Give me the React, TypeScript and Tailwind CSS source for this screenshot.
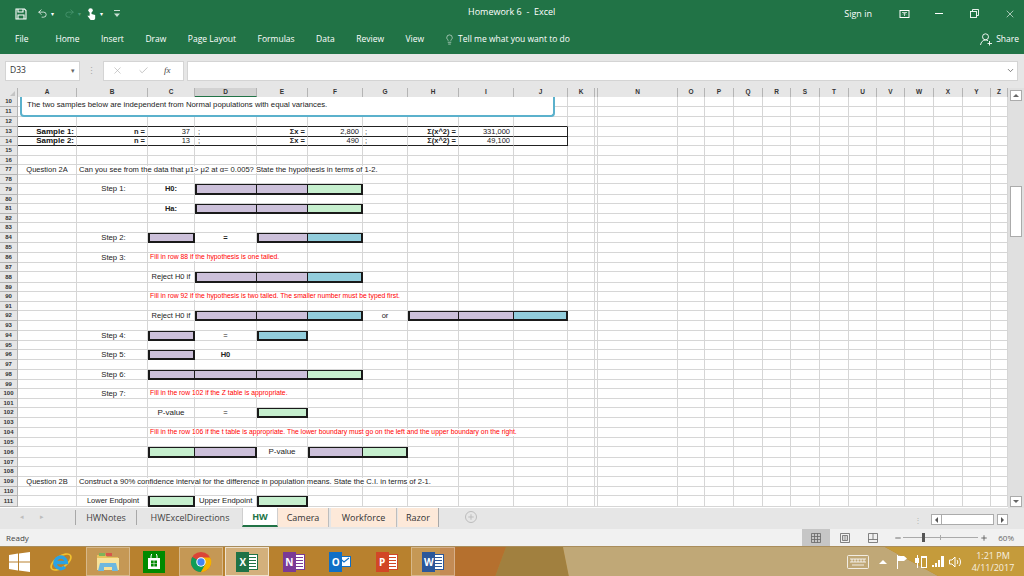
import { ChevronDown, Lightbulb, X, Check, Undo2, Redo2, Minus, Plus } from "lucide-react";

type Kind = "p" | "g" | "b";
type Cell = { t?: string; k?: Kind; c?: string; o?: boolean };
type Row = { n: string; h: string; cells?: Record<string, Cell>; box?: boolean };

const cols = [
  { n: "A", w: "w-[59px]" },
  { n: "B", w: "w-[71px]" },
  { n: "C", w: "w-[47px]" },
  { n: "D", w: "w-[62px]" },
  { n: "E", w: "w-[51px]" },
  { n: "F", w: "w-[55px]" },
  { n: "G", w: "w-[45px]" },
  { n: "H", w: "w-[51px]" },
  { n: "I", w: "w-[55px]" },
  { n: "J", w: "w-[54px]" },
  { n: "K", w: "w-[27px]" },
  { n: "", w: "w-[3px]" },
  { n: "N", w: "w-[80px]" },
  { n: "O", w: "w-[27px]" },
  { n: "P", w: "w-[29px]" },
  { n: "Q", w: "w-[29px]" },
  { n: "R", w: "w-[28px]" },
  { n: "S", w: "w-[29px]" },
  { n: "T", w: "w-[29px]" },
  { n: "U", w: "w-[28px]" },
  { n: "V", w: "w-[28px]" },
  { n: "W", w: "w-[29px]" },
  { n: "X", w: "w-[29px]" },
  { n: "Y", w: "w-[28px]" },
  { n: "Z", w: "w-[17px]" },
];

const fills: Record<Kind, string> = {
  p: "bg-[#ccc0da]",
  g: "bg-[#c6efce]",
  b: "bg-[#92cddc]",
};

const mid = "justify-center";
const step = "justify-center pl-[3px] text-[7.75px]";
const right = "justify-end pr-[2px]";
const red = "text-[#ff0000] pl-[2px] text-[6.8px]";
const long = "pl-[2px] text-[7.6px]";
const bold = "font-bold text-[8px] text-[#111]";
const small = "font-bold";

const rows: Row[] = [
  { n: "10", h: "h-[10px]" },
  { n: "11", h: "h-[10px]" },
  { n: "12", h: "h-[10px]", box: true },
  {
    n: "13",
    h: "h-[10px]",
    box: true,
    cells: {
      A: { t: "Sample 1:", c: `${right} ${bold}` },
      B: { t: "n =", c: `${right} ${small}` },
      C: { t: "37", c: "justify-end pr-[4px]" },
      D: { t: ";", c: "pl-[3px]" },
      E: { t: "Σx =", c: `${right} ${small}` },
      F: { t: "2,800", c: "justify-end pr-[3px]" },
      G: { t: ";", c: "pl-[2px]" },
      H: { t: "Σ(x^2) =", c: `${right} ${small}` },
      I: { t: "331,000", c: "justify-end pr-[3px]" },
    },
  },
  {
    n: "14",
    h: "h-[9px]",
    box: true,
    cells: {
      A: { t: "Sample 2:", c: `${right} ${bold}` },
      B: { t: "n =", c: `${right} ${small}` },
      C: { t: "13", c: "justify-end pr-[4px]" },
      D: { t: ";", c: "pl-[3px]" },
      E: { t: "Σx =", c: `${right} ${small}` },
      F: { t: "490", c: "justify-end pr-[3px]" },
      G: { t: ";", c: "pl-[2px]" },
      H: { t: "Σ(x^2) =", c: `${right} ${small}` },
      I: { t: "49,100", c: "justify-end pr-[3px]" },
    },
  },
  { n: "15", h: "h-[10px]" },
  { n: "16", h: "h-[9px]" },
  {
    n: "77",
    h: "h-[10px]",
    cells: {
      A: { t: "Question 2A", c: mid },
      B: { t: "Can you see from the data that μ1> μ2 at α= 0.005?  State the hypothesis in terms of 1-2.", c: long, o: true },
    },
  },
  { n: "78", h: "h-[9px]" },
  {
    n: "79",
    h: "h-[11px]",
    cells: { B: { t: "Step 1:", c: step }, C: { t: "H0:", c: `${mid} font-bold` }, D: { k: "p" }, E: { k: "p" }, F: { k: "g" } },
  },
  { n: "80", h: "h-[9px]" },
  {
    n: "81",
    h: "h-[10px]",
    cells: { C: { t: "Ha:", c: `${mid} font-bold` }, D: { k: "p" }, E: { k: "p" }, F: { k: "g" } },
  },
  { n: "82", h: "h-[9px]" },
  { n: "83", h: "h-[10px]" },
  {
    n: "84",
    h: "h-[10px]",
    cells: { B: { t: "Step 2:", c: step }, C: { k: "p" }, D: { t: "=", c: `${mid} font-bold` }, E: { k: "p" }, F: { k: "b" } },
  },
  { n: "85", h: "h-[10px]" },
  {
    n: "86",
    h: "h-[10px]",
    cells: { B: { t: "Step 3:", c: step }, C: { t: "Fill in row 88 if the hypothesis is one tailed.", c: red, o: true } },
  },
  { n: "87", h: "h-[9px]" },
  {
    n: "88",
    h: "h-[11px]",
    cells: { C: { t: "Reject H0 if", c: mid }, D: { k: "p" }, E: { k: "p" }, F: { k: "b" } },
  },
  { n: "89", h: "h-[9px]" },
  {
    n: "90",
    h: "h-[10px]",
    cells: { C: { t: "Fill in row 92 if the hypothesis is two tailed. The smaller number must be typed first.", c: red, o: true } },
  },
  { n: "91", h: "h-[9px]" },
  {
    n: "92",
    h: "h-[10px]",
    cells: {
      C: { t: "Reject H0 if", c: mid },
      D: { k: "p" },
      E: { k: "p" },
      F: { k: "b" },
      G: { t: "or", c: mid },
      H: { k: "p" },
      I: { k: "p" },
      J: { k: "b" },
    },
  },
  { n: "93", h: "h-[10px]" },
  {
    n: "94",
    h: "h-[10px]",
    cells: { B: { t: "Step 4:", c: step }, C: { k: "p" }, D: { t: "=", c: mid }, E: { k: "b" } },
  },
  { n: "95", h: "h-[9px]" },
  {
    n: "96",
    h: "h-[10px]",
    cells: { B: { t: "Step 5:", c: step }, C: { k: "p" }, D: { t: "H0", c: `${mid} font-bold` } },
  },
  { n: "97", h: "h-[10px]" },
  {
    n: "98",
    h: "h-[10px]",
    cells: { B: { t: "Step 6:", c: step }, C: { k: "p" }, D: { k: "p" }, E: { k: "p" }, F: { k: "g" } },
  },
  { n: "99", h: "h-[9px]" },
  {
    n: "100",
    h: "h-[10px]",
    cells: { B: { t: "Step 7:", c: step }, C: { t: "Fill in the row 102 if the Z table is appropriate.", c: red, o: true } },
  },
  { n: "101", h: "h-[9px]" },
  {
    n: "102",
    h: "h-[10px]",
    cells: { C: { t: "P-value", c: `${mid} text-[8px]` }, D: { t: "=", c: mid }, E: { k: "g" } },
  },
  { n: "103", h: "h-[10px]" },
  {
    n: "104",
    h: "h-[10px]",
    cells: {
      C: {
        t: "Fill in the row 106 if the t table is appropriate.  The lower boundary must go on the left and the upper boundary on the right.",
        c: red,
        o: true,
      },
    },
  },
  { n: "105", h: "h-[9px]" },
  {
    n: "106",
    h: "h-[11px]",
    cells: { C: { k: "g" }, D: { k: "p" }, E: { t: "P-value", c: `${mid} text-[8px]` }, F: { k: "p" }, G: { k: "g" } },
  },
  { n: "107", h: "h-[9px]" },
  { n: "108", h: "h-[10px]" },
  {
    n: "109",
    h: "h-[10px]",
    cells: {
      A: { t: "Question 2B", c: mid },
      B: { t: "Construct a 90% confidence interval for the difference in population means.  State the C.I. in terms of 2-1.", c: long, o: true },
    },
  },
  { n: "110", h: "h-[9px]" },
  {
    n: "111",
    h: "h-[11px]",
    cells: {
      B: { t: "Lower Endpoint", c: "justify-end pr-[8px]" },
      C: { k: "g" },
      D: { t: "Upper Endpoint", c: "pl-[4px] text-[7.7px]" },
      E: { k: "g" },
    },
  },
];

function SheetRow({ row }: { row: Row }) {
  return (
    <div className={`flex ${row.h}`}>
      <div className="w-[18px] shrink-0 flex items-center justify-center bg-[#e6e6e6] border-r border-b border-[#b4b4b4] text-[6px] font-bold text-[#333]">
        {row.n}
      </div>
      {cols.map((col, i) => {
        const cell = row.cells?.[col.n];
        const prev = i > 0 ? row.cells?.[cols[i - 1].n] : undefined;
        const next = row.cells?.[cols[i + 1]?.n];
        if (cell?.k) {
          return (
            <div
              key={i}
              className={`${col.w} shrink-0 border-t border-b-2 border-[#1a1a1a] ${prev?.k ? "" : "border-l-2"} ${
                next?.k ? "border-r" : "border-r-2"
              } ${fills[cell.k]}`}
            />
          );
        }
        const inBox = row.box && i < 10;
        const edge = (row.n === "13" || row.n === "14") && col.n === "J";
        return (
          <div
            key={i}
            className={`${col.w} shrink-0 flex items-center whitespace-nowrap border-r border-b leading-none ${
              inBox ? "border-b-[#222]" : "border-b-[#d6d6d6]"
            } ${edge ? "border-r-[#222]" : "border-r-[#d6d6d6]"} ${cell?.c ?? ""}`}
          >
            {cell?.t && <span className={`relative z-10 ${cell.o ? "bg-white" : ""}`}>{cell.t}</span>}
          </div>
        );
      })}
    </div>
  );
}

function SaveIcon() {
  return (
    <svg width="12" height="12" viewBox="0 0 12 12" fill="none" stroke="#fff" strokeWidth="1.1">
      <path d="M1 1h8.5L11 2.5V11H1z" />
      <path d="M3 1v3h5V1M3 11V7h6v4" />
    </svg>
  );
}

function TouchIcon() {
  return (
    <svg width="11" height="14" viewBox="0 0 12 14" fill="#fff" className="ml-[5px]">
      <circle cx="5" cy="3" r="2.4" />
      <path d="M4 3h2v4l4 1.2V12l-1 1.5H5L1.5 9 4 9z" />
    </svg>
  );
}

function ShareIcon() {
  return (
    <svg width="12" height="13" viewBox="0 0 12 13" fill="none" stroke="#fff" strokeWidth="0.9">
      <circle cx="5.5" cy="3.8" r="3" />
      <path d="M0.5 12c0.5-3 2.4-5 5-5 1 0 1.8 0.3 2.5 0.8M9.5 8v4.5M7.5 10.5h4.5" />
    </svg>
  );
}

function WinButtons() {
  return (
    <div className="flex items-center ml-[27px]">
      <svg width="10" height="8" viewBox="0 0 10 8" fill="none" stroke="#fff" strokeWidth="1" className="w-[11px]">
        <rect x="0.5" y="0.5" width="9" height="7" />
        <path d="M2.5 2.5h5M5 6V3.5M3.5 4.5L5 3l1.5 1.5" strokeWidth="0.7" />
      </svg>
      <div className="w-[8px] h-px bg-white ml-[25px]" />
      <svg width="9" height="9" viewBox="0 0 9 9" fill="none" stroke="#fff" strokeWidth="0.9" className="ml-[27px]">
        <rect x="0.5" y="2.5" width="6" height="6" />
        <path d="M2.5 2.5v-2h6v6h-2" />
      </svg>
      <X size={12} color="#fff" strokeWidth={1.2} className="ml-[25px]" />
    </div>
  );
}

function TitleBar() {
  return (
    <div className="h-[27px] flex items-center relative text-white">
      <div className="flex items-center ml-[15px] w-[130px]">
        <SaveIcon />
        <Undo2 size={11} color="#fff" strokeWidth={1.6} className="ml-[10px]" />
        <span className="ml-[3px] text-[6px] leading-none">▾</span>
        <Redo2 size={11} color="#4e9a75" strokeWidth={1.6} className="ml-[10px]" />
        <span className="ml-[3px] text-[6px] leading-none text-[#4e9a75]">▾</span>
        <TouchIcon />
        <span className="ml-[3px] text-[6px] leading-none">▾</span>
        <svg width="6" height="7" viewBox="0 0 6 7" fill="#c8ddd2" className="ml-[11px]">
          <path d="M0 0h6v1H0zM0 3.5h6L3 7z" />
        </svg>
      </div>
      <div className="absolute left-[468px] top-[6px] text-[9px] leading-[12px] whitespace-pre">Homework 6  -  Excel</div>
      <div className="ml-auto flex items-center pr-[8px]">
        <span className="text-[9px]">Sign in</span>
        <WinButtons />
      </div>
    </div>
  );
}

function RibbonTabs() {
  const tabs = ["Home", "Insert", "Draw", "Page Layout", "Formulas", "Data", "Review", "View"];
  return (
    <div className="h-[27px] flex items-center text-[8.5px] text-white pb-[2px]">
      <span className="ml-[15px] mr-[27px]">File</span>
      <div className="flex gap-[21.5px]">
        {tabs.map((t) => (
          <span key={t}>{t}</span>
        ))}
      </div>
      <Lightbulb size={11} color="#fff" strokeWidth={1.2} className="ml-[20px]" />
      <span className="ml-[3px]">Tell me what you want to do</span>
      <div className="ml-auto flex items-center pr-[5px]">
        <ShareIcon />
        <span className="ml-[4px]">Share</span>
      </div>
    </div>
  );
}

function FormulaBar() {
  return (
    <div className="h-[34px] bg-[#e6e6e6] flex items-center pl-[5px] pr-[6px] pb-[1px]">
      <div className="w-[75px] h-[20px] bg-white border border-[#d4d4d4] flex items-center pl-[4px] text-[8.5px] text-[#333]">
        D33
        <span className="ml-auto mr-[4px] text-[7px] leading-none text-[#666]">▾</span>
      </div>
      <div className="w-[23px] flex justify-center text-[#a8a8a8] text-[9px] leading-none tracking-tighter">⋮</div>
      <div className="w-[81px] h-[20px] bg-white border border-[#d4d4d4] flex items-center text-[#b0b0b0]">
        <X size={11} strokeWidth={1.4} className="ml-[8px]" />
        <Check size={11} strokeWidth={1.6} className="ml-[15px]" />
        <span className="ml-[15px] text-[9px] italic font-['Liberation_Serif',serif] text-[#444]">fx</span>
      </div>
      <div className="ml-[3px] flex-1 h-[20px] bg-white border border-[#d4d4d4] flex items-center justify-end pr-[2px]">
        <ChevronDown size={9} color="#555" strokeWidth={2} />
      </div>
    </div>
  );
}

function ColHeader() {
  return (
    <div className="h-[9px] flex bg-[#e6e6e6] text-[6.5px] leading-none font-bold text-[#333]">
      <div className="w-[18px] shrink-0 border-r border-[#b4b4b4] flex items-end justify-end pr-[2px] pb-[1px]">
        <div className="w-0 h-0 border-l-[5px] border-l-transparent border-b-[5px] border-b-[#c4c4c4]" />
      </div>
      {cols.map((col, i) => (
        <div
          key={i}
          className={`${col.w} shrink-0 flex items-center justify-center border-r border-[#b4b4b4] ${
            col.n === "D" ? "bg-[#d2d2d2] border-b border-b-[#217346]" : ""
          }`}
        >
          {col.n}
        </div>
      ))}
    </div>
  );
}

function VScroll() {
  return (
    <div className="w-[16px] shrink-0 bg-[#e0e0e0] flex flex-col items-center pt-[2px] pb-[1px]">
      <div className="w-[12px] h-[11px] bg-white border border-[#ababab] flex items-center justify-center">
        <div className="w-0 h-0 border-x-[3px] border-x-transparent border-b-[3px] border-b-[#666]" />
      </div>
      <div className="mt-[85px] w-[12px] h-[51px] bg-white border border-[#ababab]" />
      <div className="mt-auto w-[12px] h-[11px] bg-white border border-[#ababab] flex items-center justify-center">
        <div className="w-0 h-0 border-x-[3px] border-x-transparent border-t-[3px] border-t-[#666]" />
      </div>
    </div>
  );
}

function SheetTabs() {
  return (
    <div className="h-[21px] bg-[#e6e6e6] flex items-start text-[9px] text-[#444] relative">
      <div className="w-[75px] h-[19px] flex items-center pl-[20px] gap-[16px] text-[#bdbdbd] text-[7px]">
        <span>◂</span>
        <span>▸</span>
      </div>
      <div className="flex h-[19px] items-center">
        <div className="w-[62px] h-[15px] border-x border-[#a8a8a8] flex items-center justify-center">HWNotes</div>
        <div className="w-[106px] h-[15px] flex items-center justify-center">HWExcelDirections</div>
        <div className="w-[36px] h-[19px] ml-[-1px] bg-white border-x border-b-2 border-x-[#cfcfcf] border-b-[#217346] flex items-center justify-center font-bold text-[#217346]">
          HW
        </div>
        <div className="w-[51px] h-[19px] bg-[#fde9d9] border-r border-[#bdbdbd] flex items-center justify-center text-[#333]">Camera</div>
        <div className="w-[66px] h-[19px] ml-[2px] bg-[#fde9d9] border-r border-[#bdbdbd] flex items-center justify-center text-[#333]">Workforce</div>
        <div className="w-[41px] h-[19px] ml-[1px] bg-[#fde9d9] border-r border-[#a8a8a8] flex items-center justify-center text-[#333]">Razor</div>
      </div>
      <div className="ml-[26px] mt-[3px] w-[12px] h-[12px] rounded-full border border-[#bdbdbd] flex items-center justify-center">
        <Plus size={8} color="#bdbdbd" strokeWidth={3} />
      </div>
      <div className="ml-auto flex items-center h-[11px] mt-[6px] mr-[16px]">
        <span className="text-[8px] text-[#b4b4b4] leading-none mr-[9px]">⋮</span>
        <div className="w-[11px] h-[11px] bg-white border border-[#ababab] flex items-center justify-center">
          <div className="w-0 h-0 border-y-[3px] border-y-transparent border-r-[3px] border-r-[#555]" />
        </div>
        <div className="w-[52px] h-[11px] bg-white border-y border-r border-[#ababab]" />
        <div className="ml-[3px] w-[11px] h-[11px] bg-white border border-[#ababab] flex items-center justify-center">
          <div className="w-0 h-0 border-y-[3px] border-y-transparent border-l-[3px] border-l-[#555]" />
        </div>
      </div>
    </div>
  );
}

function StatusBar() {
  return (
    <div className="h-[17px] bg-[#f1f1f1] flex items-center text-[8px] text-[#444] pl-[6px]">
      <span>Ready</span>
      <div className="ml-auto flex items-center h-full">
        <div className="w-[28px] h-full bg-[#c6c6c6] flex items-center justify-center">
          <svg width="10" height="10" viewBox="0 0 10 10" fill="none" stroke="#666" strokeWidth="0.8">
            <path d="M0.5 0.5h9v9h-9zM3.5 0.5v9M6.5 0.5v9M0.5 3.5h9M0.5 6.5h9" />
          </svg>
        </div>
        <div className="w-[29px] flex justify-center">
          <svg width="10" height="10" viewBox="0 0 10 10" fill="none" stroke="#666" strokeWidth="0.8">
            <path d="M0.5 0.5h9v9h-9zM2.5 2.5h5v5h-5zM3.5 4h3M3.5 6h3" />
          </svg>
        </div>
        <div className="w-[28px] flex justify-center">
          <svg width="10" height="10" viewBox="0 0 10 10" fill="none" stroke="#666" strokeWidth="0.8">
            <path d="M0.5 0.5h9v9h-9zM0.5 6.5h9M5 0.5v6" />
          </svg>
        </div>
        <Minus size={8} color="#555" strokeWidth={2.5} className="ml-[7px]" />
        <div className="relative w-[75px] h-px bg-[#aaa] ml-[1px]">
          <div className="absolute left-[19px] top-[-4px] w-[3px] h-[9px] bg-[#555]" />
          <div className="absolute left-[37px] top-[-2px] w-px h-[5px] bg-[#aaa]" />
        </div>
        <Plus size={8} color="#555" strokeWidth={2.5} className="ml-[2px]" />
        <span className="w-[36px] text-right pr-[10px] text-[#666]">60%</span>
      </div>
    </div>
  );
}

function OfficeIcon({ bg, border, line, letter }: { bg: string; border: string; line: string; letter: string }) {
  return (
    <div className="relative w-[22px] h-[20px]">
      <div className={`absolute right-0 top-[2px] w-[14px] h-[16px] bg-white border ${border}`} />
      <div className={`absolute right-[2px] top-[5px] w-[8px] h-px ${line}`} />
      <div className={`absolute right-[2px] top-[8px] w-[8px] h-px ${line}`} />
      <div className={`absolute right-[2px] top-[11px] w-[8px] h-px ${line}`} />
      <div className={`absolute right-[2px] top-[14px] w-[8px] h-px ${line}`} />
      <div className={`absolute left-0 top-0 w-[13px] h-[20px] ${bg} flex items-center justify-center text-white text-[10px] font-bold leading-none`}>
        {letter}
      </div>
    </div>
  );
}

function IeLogo() {
  return (
    <svg width="24" height="24" viewBox="0 0 24 24" fill="none">
      <ellipse cx="12" cy="12" rx="11.5" ry="5.5" stroke="#f2c230" strokeWidth="1.6" transform="rotate(-35 12 12)" />
      <path d="M6.5 12.5h11a5.8 5.8 0 1 0-1.6 4.4" stroke="#2ba3e3" strokeWidth="3.4" />
    </svg>
  );
}

function Chrome() {
  return (
    <svg width="22" height="22" viewBox="0 0 24 24">
      <circle cx="12" cy="12" r="11" fill="#db4437" />
      <path d="M12 12L2.5 6.5A11 11 0 0 0 12 23l5.5-9.5z" fill="#0f9d58" />
      <path d="M12 7h10a11 11 0 0 1-10 16l5-9z" fill="#f4b400" />
      <circle cx="12" cy="12" r="5.2" fill="#fff" />
      <circle cx="12" cy="12" r="4" fill="#4285f4" />
    </svg>
  );
}

function Explorer() {
  return (
    <svg width="24" height="20" viewBox="0 0 24 20">
      <path d="M1 3h8l2 2h11v13H1z" fill="#e8c25c" />
      <path d="M3 1h6v3H3z" fill="#7fb35a" />
      <path d="M10 1h6v3h-6z" fill="#d8564a" />
      <path d="M1 6h22v12H1z" fill="#f8e29a" />
      <path d="M4 11h16l2 8h-6v-4H8v4H2z" fill="#6fb8de" />
    </svg>
  );
}

function Taskbar() {
  const slot = "w-[46.5px] h-[30px] shrink-0 flex items-center justify-center";
  const open = "w-[44px] h-[29px] flex items-center justify-center bg-[#ffffff30] border border-[#ffffff50]";
  return (
    <div className="relative h-[30px] border-t border-[#a98d5c] bg-[#b8812e] flex items-center overflow-hidden">
      <svg className="absolute inset-0" width="1024" height="30" viewBox="0 0 1024 30">
        <path d="M440 0h66l-11 30h-55z" fill="#b5702e" />
        <path d="M506 0h57l6 30h-74z" fill="#a1803f" />
        <path d="M563 0h322l55 30H569z" fill="#c0a877" />
        <path d="M885 0h139v30h-84z" fill="#c59b3b" />
      </svg>
      <div className="relative flex items-center h-full">
        <div className="w-[38px] flex justify-center">
          <svg width="21" height="20" viewBox="0 0 21 20" fill="#fff">
            <path d="M0 3l9-1.4v8H0zM10 1.4L21 0v9.6H10zM0 10.6h9v8L0 17zM10 10.6h11V20l-11-1.5z" />
          </svg>
        </div>
        <div className={slot}>
          <IeLogo />
        </div>
        <div className={slot}>
          <div className={open}>
            <Explorer />
          </div>
        </div>
        <div className={slot}>
          <div className="w-[22px] h-[22px] bg-[#008a00] flex items-center justify-center">
            <svg width="14" height="15" viewBox="0 0 14 15">
              <path d="M1 4h12v11H1z" fill="#fff" />
              <path d="M4 4V2a3 3 0 0 1 6 0v2" fill="none" stroke="#fff" />
              <path d="M4 6.5h2.7v2.7H4zM7.3 6.5H10v2.7H7.3zM4 9.8h2.7v2.7H4zM7.3 9.8H10v2.7H7.3z" fill="#008a00" />
            </svg>
          </div>
        </div>
        <div className={slot}>
          <div className={open}>
            <Chrome />
          </div>
        </div>
        <div className={slot}>
          <div className="w-[44px] h-[29px] flex items-center justify-center bg-[#ffffff60] border border-[#ffffffa0]">
            <OfficeIcon bg="bg-[#1f7246]" border="border-[#1f7246]" line="bg-[#1f7246]" letter="X" />
          </div>
        </div>
        <div className={slot}>
          <OfficeIcon bg="bg-[#7b3a96]" border="border-[#7b3a96]" line="bg-[#7b3a96]" letter="N" />
        </div>
        <div className={slot}>
          <div className="relative w-[22px] h-[20px]">
            <div className="absolute right-0 top-[4px] w-[13px] h-[11px] bg-white border border-[#0f6fc6]" />
            <svg width="11" height="9" viewBox="0 0 11 9" fill="none" stroke="#0f6fc6" strokeWidth="1.2" className="absolute right-[1px] top-[5px]">
              <path d="M1 1.5l4 3.5 5-4" />
            </svg>
            <div className="absolute left-0 top-0 w-[13px] h-[20px] bg-[#0f6fc6] flex items-center justify-center text-white text-[10px] font-bold leading-none">
              O
            </div>
          </div>
        </div>
        <div className={slot}>
          <OfficeIcon bg="bg-[#d24726]" border="border-[#d24726]" line="bg-[#d24726]" letter="P" />
        </div>
        <div className={slot}>
          <div className={open}>
            <OfficeIcon bg="bg-[#2b579a]" border="border-[#2b579a]" line="bg-[#2b579a]" letter="W" />
          </div>
        </div>
      </div>
      <div className="relative ml-auto flex items-center h-full text-white">
        <svg width="22" height="14" viewBox="0 0 22 14" fill="none" stroke="#fff" strokeWidth="0.8">
          <rect x="0.5" y="0.5" width="21" height="13" rx="1" />
          <path d="M3 4h16M3 7h16M5 10h12M5 4v3M8 4v3M11 4v3M14 4v3M17 4v3" />
        </svg>
        <div className="ml-[10px] w-0 h-0 border-x-[4px] border-x-transparent border-b-[4px] border-b-white" />
        <svg width="12" height="14" viewBox="0 0 12 14" fill="#fff" className="ml-[9px]">
          <path d="M1 0h1v14H1zM2 1h6l3 2.5L8 6H2z" />
        </svg>
        <svg width="13" height="13" viewBox="0 0 13 13" fill="#fff" className="ml-[6px]">
          <path d="M1 3h2V0h1v3h1v5H4v5H3V8H1zM7 1h6v12H7zM8 3v9h4V3z" />
        </svg>
        <svg width="12" height="11" viewBox="0 0 12 11" fill="#fff" className="ml-[5px]">
          <path d="M0 9h2v2H0zM3 7h2v4H3zM6 4h2v7H6zM9 0h3v11H9z" />
        </svg>
        <svg width="13" height="12" viewBox="0 0 13 12" fill="none" stroke="#fff" strokeWidth="1" className="ml-[5px]">
          <path d="M0.5 4h2.5l3-3v10l-3-3H0.5zM8 4c1 1 1 3 0 4M10 2c2 2 2 6 0 8" />
        </svg>
        <div className="w-[62px] text-center text-[9px] leading-[12px] text-[#f7f0e0]">
          <div>1:21 PM</div>
          <div>4/11/2017</div>
        </div>
      </div>
    </div>
  );
}

export default function App() {
  return (
    <div className="w-[1024px] h-[576px] overflow-hidden flex flex-col bg-white font-['Open_Sans',sans-serif]">
      <div className="bg-[#217346]">
        <TitleBar />
        <RibbonTabs />
      </div>
      <FormulaBar />
      <div className="flex h-[420px] overflow-hidden bg-[#e6e6e6]">
        <div className="w-[1008px] shrink-0 font-['Liberation_Sans',sans-serif]">
          <ColHeader />
          <div className="relative bg-white overflow-hidden h-[411px] text-[7.5px] text-[#222]">
            {rows.map((row) => (
              <SheetRow key={row.n} row={row} />
            ))}
            {/* text box shape, top edge is scrolled off */}
            <div className="absolute z-20 left-[20px] top-0 w-[535px] h-[20px] bg-white border-x-2 border-b-2 border-[#5bb1cc] rounded-b-[4px] flex items-center pl-[5px] pb-[2px] text-[7.75px] leading-none whitespace-nowrap">
              The two samples below are independent from Normal populations with equal variances.
            </div>
          </div>
        </div>
        <VScroll />
      </div>
      <SheetTabs />
      <StatusBar />
      <Taskbar />
    </div>
  );
}
